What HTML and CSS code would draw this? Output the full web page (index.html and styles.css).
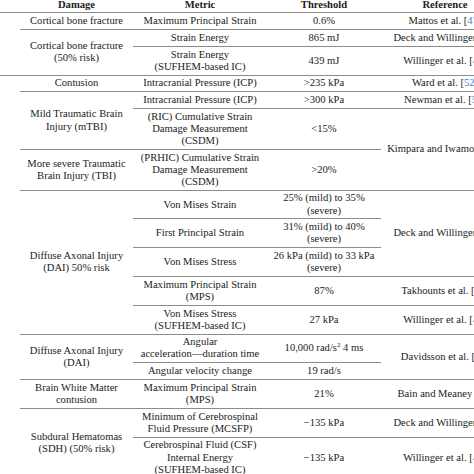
FILE: index.html
```html
<!DOCTYPE html>
<html lang="en">
<head>
<meta charset="utf-8">
<title>Injury thresholds</title>
<link rel="stylesheet" href="styles.css">
</head>
<body>
<table class="crit">
  <colgroup>
    <col class="c-sp"><col class="c-dmg"><col class="c-met"><col class="c-thr"><col class="c-ref">
  </colgroup>
  <thead>
    <tr><th class="sp rule"></th><th>Damage</th><th>Metric</th><th>Threshold</th><th>Reference</th></tr>
  </thead>
  <tbody>
    <tr>
      <td class="sp rule" rowspan="3"></td>
      <td>Cortical bone fracture</td>
      <td>Maximum Principal Strain</td>
      <td>0.6%</td>
      <td>Mattos et al. [<span class="rn">47</span>]</td>
    </tr>
    <tr>
      <td rowspan="2">Cortical bone fracture<br>(50% risk)</td>
      <td>Strain Energy</td>
      <td>865 mJ</td>
      <td>Deck and Willinger [<span class="rn">48</span>]</td>
    </tr>
    <tr>
      <td>Strain Energy<br>(SUFHEM-based IC)</td>
      <td>439 mJ</td>
      <td>Willinger et al. [<span class="rn">49</span>]</td>
    </tr>
    <tr>
      <td class="sp" rowspan="14"></td>
      <td>Contusion</td>
      <td>Intracranial Pressure (ICP)</td>
      <td>&gt;235 kPa</td>
      <td>Ward et al. [<span class="rn">52</span>]</td>
    </tr>
    <tr>
      <td rowspan="2">Mild Traumatic Brain<br>Injury (mTBI)</td>
      <td>Intracranial Pressure (ICP)</td>
      <td>&gt;300 kPa</td>
      <td>Newman et al. [<span class="rn">53</span>]</td>
    </tr>
    <tr>
      <td>(RIC) Cumulative Strain<br>Damage Measurement<br>(CSDM)</td>
      <td>&lt;15%</td>
      <td rowspan="2">Kimpara and Iwamoto [<span class="rn">54</span>]</td>
    </tr>
    <tr>
      <td>More severe Traumatic<br>Brain Injury (TBI)</td>
      <td>(PRHIC) Cumulative Strain<br>Damage Measurement<br>(CSDM)</td>
      <td>&gt;20%</td>
    </tr>
    <tr>
      <td rowspan="5">Diffuse Axonal Injury<br>(DAI) 50% risk</td>
      <td>Von Mises Strain</td>
      <td>25% (mild) to 35%<br>(severe)</td>
      <td rowspan="3">Deck and Willinger [<span class="rn">48</span>]</td>
    </tr>
    <tr>
      <td>First Principal Strain</td>
      <td>31% (mild) to 40%<br>(severe)</td>
    </tr>
    <tr>
      <td>Von Mises Stress</td>
      <td>26 kPa (mild) to 33 kPa<br>(severe)</td>
    </tr>
    <tr>
      <td>Maximum Principal Strain<br>(MPS)</td>
      <td>87%</td>
      <td>Takhounts et al. [<span class="rn">55</span>]</td>
    </tr>
    <tr>
      <td>Von Mises Stress<br>(SUFHEM-based IC)</td>
      <td>27 kPa</td>
      <td>Willinger et al. [<span class="rn">49</span>]</td>
    </tr>
    <tr>
      <td rowspan="2">Diffuse Axonal Injury<br>(DAI)</td>
      <td>Angular<br>acceleration—duration time</td>
      <td>10,000 rad/s<sup>2</sup> 4 ms</td>
      <td rowspan="2">Davidsson et al. [<span class="rn">56</span>]</td>
    </tr>
    <tr>
      <td>Angular velocity change</td>
      <td>19 rad/s</td>
    </tr>
    <tr>
      <td>Brain White Matter<br>contusion</td>
      <td>Maximum Principal Strain<br>(MPS)</td>
      <td>21%</td>
      <td>Bain and Meaney [<span class="rn">57</span>]</td>
    </tr>
    <tr>
      <td rowspan="2">Subdural Hematomas<br>(SDH) (50% risk)</td>
      <td>Minimum of Cerebrospinal<br>Fluid Pressure (MCSFP)</td>
      <td>−135 kPa</td>
      <td>Deck and Willinger [<span class="rn">48</span>]</td>
    </tr>
    <tr>
      <td>Cerebrospinal Fluid (CSF)<br>Internal Energy<br>(SUFHEM-based IC)</td>
      <td>−135 kPa</td>
      <td>Willinger et al. [<span class="rn">49</span>]</td>
    </tr>
  </tbody>
</table>
</body>
</html>
```

FILE: styles.css
```css
html, body {
  margin: 0;
  padding: 0;
  overflow: hidden;
  background: #ffffff;
}
body {
  width: 474px;
  height: 474px;
}
.crit {
  border-collapse: collapse;
  table-layout: fixed;
  width: 509px;
  margin-top: -1.5px;
  font-family: "Liberation Serif", "Times New Roman", serif;
  font-size: 10.6px;
  line-height: 12.1px;
  color: #222222;
}
.c-sp { width: 20px; }
.c-dmg { width: 113px; }
.c-met { width: 134px; }
.c-thr { width: 114px; }
.c-ref { width: 128px; }
.crit th,
.crit td {
  padding: 1.8px 0;
  text-align: center;
  vertical-align: middle;
  white-space: nowrap;
  border-bottom: 1px solid #8c8c8c;
  font-weight: normal;
}
.crit th {
  font-weight: bold;
  padding-top: 0;
}
.crit .sp {
  border-bottom: none;
}
.crit .sp.rule {
  border-bottom: 1px solid #8c8c8c;
}
.rn {
  color: #3f7fd1;
}
.crit sup {
  font-size: 7px;
  line-height: 0;
  vertical-align: 4px;
}
```
